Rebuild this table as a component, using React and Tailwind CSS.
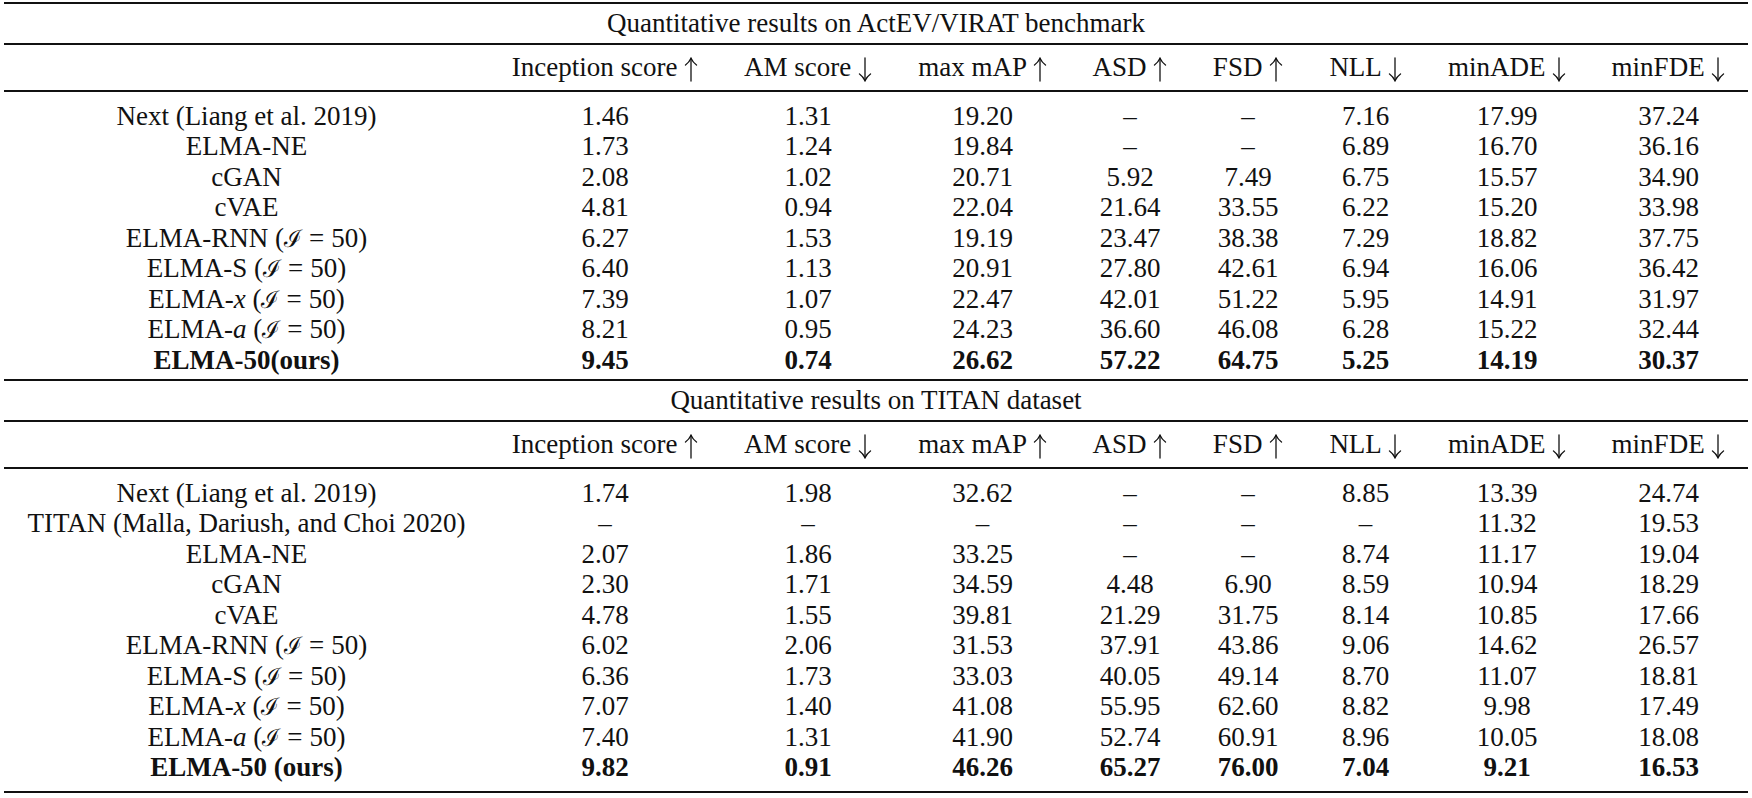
import React from "react";

const COLS = "grid grid-cols-[485px_232px_174px_175px_120px_116px_119px_164px_159px]";

const Up = () => (
  <svg width="14" height="25" viewBox="0 0 14 25" className="inline-block align-[-6px]" fill="none" stroke="#111" strokeWidth="1.3" strokeLinecap="round">
    <path d="M7 1.5 L7 24" />
    <path d="M1.5 8 Q5 5.5 7 1.2 Q9 5.5 12.5 8" />
  </svg>
);
const Down = () => (
  <svg width="14" height="25" viewBox="0 0 14 25" className="inline-block align-[-6px]" fill="none" stroke="#111" strokeWidth="1.3" strokeLinecap="round">
    <path d="M7 1 L7 23.5" />
    <path d="M1.5 17 Q5 19.5 7 23.8 Q9 19.5 12.5 17" />
  </svg>
);

const headers = [
  ["Inception score", "up"],
  ["AM score", "down"],
  ["max mAP", "up"],
  ["ASD", "up"],
  ["FSD", "up"],
  ["NLL", "down"],
  ["minADE", "down"],
  ["minFDE", "down"],
];

const I = () => <span className="font-['DejaVu_Serif',serif] text-[24px]">ℐ</span>;
const Math50 = () => (
  <>
    (<I />
    <span className="px-[7px]">=</span>50)
  </>
);

const sec1 = [
  [<>Next (Liang et al. 2019)</>, ["1.46", "1.31", "19.20", "–", "–", "7.16", "17.99", "37.24"]],
  [<>ELMA-NE</>, ["1.73", "1.24", "19.84", "–", "–", "6.89", "16.70", "36.16"]],
  [<>cGAN</>, ["2.08", "1.02", "20.71", "5.92", "7.49", "6.75", "15.57", "34.90"]],
  [<>cVAE</>, ["4.81", "0.94", "22.04", "21.64", "33.55", "6.22", "15.20", "33.98"]],
  [<>ELMA-RNN <Math50 /></>, ["6.27", "1.53", "19.19", "23.47", "38.38", "7.29", "18.82", "37.75"]],
  [<>ELMA-S <Math50 /></>, ["6.40", "1.13", "20.91", "27.80", "42.61", "6.94", "16.06", "36.42"]],
  [<>ELMA-<i>x</i> <Math50 /></>, ["7.39", "1.07", "22.47", "42.01", "51.22", "5.95", "14.91", "31.97"]],
  [<>ELMA-<i>a</i> <Math50 /></>, ["8.21", "0.95", "24.23", "36.60", "46.08", "6.28", "15.22", "32.44"]],
  [<>ELMA-50(ours)</>, ["9.45", "0.74", "26.62", "57.22", "64.75", "5.25", "14.19", "30.37"], true],
];

const sec2 = [
  [<>Next (Liang et al. 2019)</>, ["1.74", "1.98", "32.62", "–", "–", "8.85", "13.39", "24.74"]],
  [<>TITAN (Malla, Dariush, and Choi 2020)</>, ["–", "–", "–", "–", "–", "–", "11.32", "19.53"]],
  [<>ELMA-NE</>, ["2.07", "1.86", "33.25", "–", "–", "8.74", "11.17", "19.04"]],
  [<>cGAN</>, ["2.30", "1.71", "34.59", "4.48", "6.90", "8.59", "10.94", "18.29"]],
  [<>cVAE</>, ["4.78", "1.55", "39.81", "21.29", "31.75", "8.14", "10.85", "17.66"]],
  [<>ELMA-RNN <Math50 /></>, ["6.02", "2.06", "31.53", "37.91", "43.86", "9.06", "14.62", "26.57"]],
  [<>ELMA-S <Math50 /></>, ["6.36", "1.73", "33.03", "40.05", "49.14", "8.70", "11.07", "18.81"]],
  [<>ELMA-<i>x</i> <Math50 /></>, ["7.07", "1.40", "41.08", "55.95", "62.60", "8.82", "9.98", "17.49"]],
  [<>ELMA-<i>a</i> <Math50 /></>, ["7.40", "1.31", "41.90", "52.74", "60.91", "8.96", "10.05", "18.08"]],
  [<>ELMA-50 (ours)</>, ["9.82", "0.91", "46.26", "65.27", "76.00", "7.04", "9.21", "16.53"], true],
];

const Rule = () => <div className="h-[2px] bg-[#111]" />;

function Section({ title, rows, dataClass }) {
  return (
    <>
      <div className="h-[39px] flex items-center justify-center">{title}</div>
      <Rule />
      <div className={`${COLS} h-[45px] items-center`}>
        <div />
        {headers.map(([h, dir]) => (
          <div key={h} className="text-center whitespace-nowrap">
            {h} {dir === "up" ? <Up /> : <Down />}
          </div>
        ))}
      </div>
      <Rule />
      <div className={dataClass}>
        {rows.map(([name, vals, bold], i) => (
          <div key={i} className={`${COLS} h-[30.5px] items-center ${bold ? "font-bold" : ""}`}>
            <div className="text-center whitespace-nowrap">{name}</div>
            {vals.map((v, j) => (
              <div key={j} className="text-center whitespace-nowrap">
                {v}
              </div>
            ))}
          </div>
        ))}
      </div>
    </>
  );
}

export default function App() {
  return (
    <div className="w-[1752px] h-[798px] bg-white text-[#111] font-['Liberation_Serif',serif] text-[27px] leading-none pt-[2px] px-[4px] overflow-hidden">
      <div className="w-[1744px]">
        <Rule />
        <Section
          title="Quantitative results on ActEV/VIRAT benchmark"
          rows={sec1}
          dataClass="h-[287px] pt-[9px]"
        />
        <Rule />
        <Section
          title="Quantitative results on TITAN dataset"
          rows={sec2}
          dataClass="h-[322px] pt-[9px]"
        />
        <Rule />
      </div>
    </div>
  );
}
